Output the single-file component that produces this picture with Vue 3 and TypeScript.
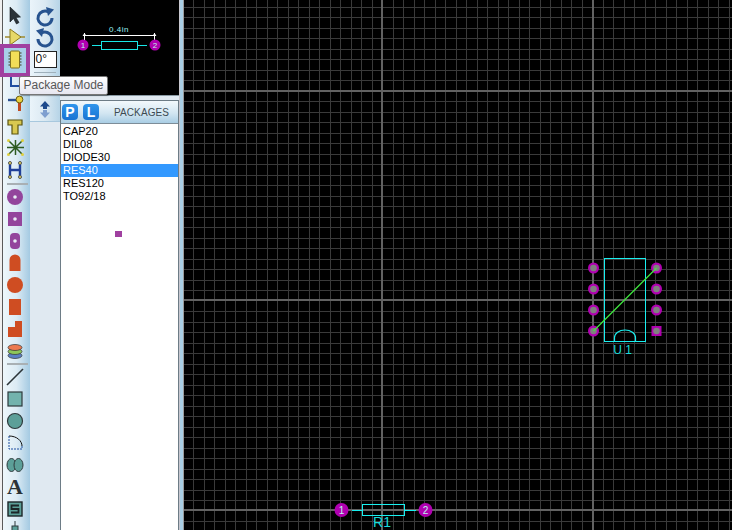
<script setup lang="ts">
const packages = ['CAP20', 'DIL08', 'DIODE30', 'RES40', 'RES120', 'TO92/18']
const selected = 'RES40'

const majorX = [382, 593]
const majorY = [91, 300, 510]
const minorX: number[] = []
const minorY: number[] = []
for (let k = -18; k < 36; k++) {
  const x = Math.round(382 + k * 10.5)
  if (x >= 184 && k % 20 !== 0) minorX.push(x)
}
for (let k = -8; k < 42; k++) {
  const y = Math.round(90.5 + k * 10.5)
  if (y >= 0 && k % 20 !== 0) minorY.push(y)
}
const pinRows = [268, 289, 310, 331]
</script>

<template>
  <div class="app">
    <div class="edge"></div>
    <nav class="tools">
      <span class="tool"><svg width="22" height="22" viewBox="0 0 22 22"><path d="M6 2 L6 17 L9.500 13.500 L12.500 19 L15 17.500 L12 12.500 L16.500 12 Z" fill="#2b3338" stroke="#11161a" stroke-width=".6"/></svg></span>
      <span class="tool"><svg width="22" height="22" viewBox="0 0 22 22"><path d="M1 10 H7 M15 10 H21" stroke="#a08a30" stroke-width="1.5"/><path d="M6 2 V18 L17 10 Z" fill="#e6d868" stroke="#8a7a20"/></svg></span>
      <span class="tool on"><svg width="22" height="22" viewBox="0 0 22 22"><path d="M4.500 4h2.500M4.500 7h2.500M4.500 10h2.500M4.500 13h2.500M4.500 16h2.500M15 4h2.500M15 7h2.500M15 10h2.500M15 13h2.500M15 16h2.500" stroke="#3a3a18"/><rect x="6.500" y="2" width="9" height="17" rx="1" fill="#f2de58" stroke="#7d7020"/></svg></span>
      <span class="tool"><svg width="22" height="22" viewBox="0 0 22 22"><path d="M7 3 V15 H18" fill="none" stroke="#1f4ea0" stroke-width="2"/><rect x="5" y="1" width="4" height="4" fill="#e0c820"/></svg></span>
      <span class="tool"><svg width="22" height="22" viewBox="0 0 22 22"><path d="M4 7 H15" stroke="#2a4f90" stroke-width="2.400"/><path d="M15.500 8 V18" stroke="#c04a20" stroke-width="3"/><circle cx="15.500" cy="6.500" r="3.400" fill="#e8d040" stroke="#6b6010"/></svg></span>
      <span class="tool"><svg width="22" height="22" viewBox="0 0 22 22"><path d="M4 5 H18 V10 H14 V19 H8 V10 H4 Z" fill="#d8c850" stroke="#5b5510" stroke-width="1.200"/></svg></span>
      <span class="tool"><svg width="22" height="22" viewBox="0 0 22 22"><path d="M5 4 L18 17 M18 4 L5 17 M3 10.500 H20 M11.500 3 V18" stroke="#2c5a20" stroke-width="1.500"/><g fill="#e0d040"><circle cx="4.500" cy="3.500" r="1.500"/><circle cx="18.500" cy="3.500" r="1.500"/><circle cx="4.500" cy="17.500" r="1.500"/><circle cx="18.500" cy="17.500" r="1.500"/></g></svg></span>
      <span class="tool"><svg width="22" height="22" viewBox="0 0 22 22"><path d="M6 5 V17 M16 5 V17 M6 11 H16" stroke="#1f3f98" stroke-width="2.400" fill="none"/><g fill="#e8d860" stroke="#555"><circle cx="6" cy="4" r="1.500"/><circle cx="16" cy="4" r="1.500"/><circle cx="6" cy="18" r="1.500"/><circle cx="16" cy="18" r="1.500"/></g></svg></span>
      <span class="sep"></span>
      <span class="tool"><svg width="22" height="22" viewBox="0 0 22 22"><circle cx="11" cy="11" r="8" fill="#93459c"/><circle cx="11" cy="11" r="1.800" fill="#e8eef4"/></svg></span>
      <span class="tool"><svg width="22" height="22" viewBox="0 0 22 22"><rect x="4" y="4" width="14" height="14" fill="#93459c"/><circle cx="11" cy="11" r="1.800" fill="#e8eef4"/></svg></span>
      <span class="tool"><svg width="22" height="22" viewBox="0 0 22 22"><rect x="6" y="3" width="10" height="16" rx="4" fill="#93459c"/><circle cx="11" cy="11" r="1.800" fill="#e8eef4"/></svg></span>
      <span class="tool"><svg width="22" height="22" viewBox="0 0 22 22"><path d="M5.500 19 V8 A5.500 5.500 0 0 1 16.500 8 V19 Z" fill="#cf4d22"/></svg></span>
      <span class="tool"><svg width="22" height="22" viewBox="0 0 22 22"><circle cx="11" cy="11" r="8" fill="#cf4d22"/></svg></span>
      <span class="tool"><svg width="22" height="22" viewBox="0 0 22 22"><rect x="5" y="3" width="12" height="16" fill="#cf4d22"/></svg></span>
      <span class="tool"><svg width="22" height="22" viewBox="0 0 22 22"><path d="M4 19 V9 H11 V3 H18 V19 Z" fill="#cf4d22"/></svg></span>
      <span class="tool"><svg width="22" height="22" viewBox="0 0 22 22"><ellipse cx="11" cy="15.500" rx="7" ry="3" fill="#5b7fc4" stroke="#333" stroke-width=".7"/><ellipse cx="11" cy="11.500" rx="7" ry="3" fill="#8ec65a" stroke="#333" stroke-width=".7"/><ellipse cx="11" cy="7.500" rx="7" ry="3" fill="#ec7a50" stroke="#333" stroke-width=".7"/></svg></span>
      <span class="sep thin"></span>
      <span class="tool"><svg width="22" height="22" viewBox="0 0 22 22"><path d="M3 19 L19 3" stroke="#2c3438" stroke-width="1.600"/></svg></span>
      <span class="tool"><svg width="22" height="22" viewBox="0 0 22 22"><rect x="4" y="4" width="14" height="14" fill="#73b3ad" stroke="#2e3a3c" stroke-width="1.200"/></svg></span>
      <span class="tool"><svg width="22" height="22" viewBox="0 0 22 22"><circle cx="11" cy="11" r="7.500" fill="#5c9f98" stroke="#2e3a3c" stroke-width="1.200"/></svg></span>
      <span class="tool"><svg width="22" height="22" viewBox="0 0 22 22"><path d="M5 4 C13 4 18 9 18 14" fill="none" stroke="#111" stroke-width="1"/><path d="M5 4 V17 H18 V14" fill="none" stroke="#1f4ea0" stroke-dasharray="2 1"/></svg></span>
      <span class="tool"><svg width="22" height="22" viewBox="0 0 22 22"><ellipse cx="7.500" cy="11" rx="4.500" ry="6.500" fill="#5c9f98" stroke="#2e3a3c"/><ellipse cx="14.500" cy="11" rx="4.500" ry="6.500" fill="#5c9f98" stroke="#2e3a3c"/></svg></span>
      <span class="tool letter">A</span>
      <span class="tool"><svg width="22" height="22" viewBox="0 0 22 22"><rect x="4" y="4" width="14" height="14" fill="#5c9f98" stroke="#1c2628" stroke-width="1.400"/><path d="M15 7.500 H7.500 V11 H14.500 V14.500 H7" fill="none" stroke="#1c2628" stroke-width="1.800"/></svg></span>
      <span class="tool"><svg width="22" height="22" viewBox="0 0 22 22"><path d="M11 1 V21 M5 11 H17" stroke="#2e3a3c"/><rect x="8" y="6" width="6" height="10" fill="#5c9f98" stroke="#2e3a3c"/></svg></span>
    </nav>

    <section class="side">
      <div class="top">
        <div class="rotate">
          <svg class="rot" width="22" height="22" viewBox="0 0 22 22"><path d="M18 12 A7 7 0 1 1 14.500 6" fill="none" stroke="#27538f" stroke-width="3"/><path d="M12 1 L20 3.500 L14 10 Z" fill="#27538f"/></svg>
          <svg class="rot" width="22" height="22" viewBox="0 0 22 22"><path d="M4 11 A7 7 0 1 0 7.500 5" fill="none" stroke="#27538f" stroke-width="3"/><path d="M10 0 L2 2.500 L8 9 Z" fill="#27538f"/></svg>
          <div class="angle">0°</div>
          <div class="rule"></div>
          <svg class="flip" width="10" height="17" viewBox="0 0 10 17"><path d="M5 0 L10 5.500 H7 V8 H3 V5.500 H0 Z" fill="#1d4a8c"/><path d="M5 17 L10 11.500 H7 V9 H3 V11.500 H0 Z" fill="#7f9fcf"/></svg>
        </div>
        <div class="preview">
          <svg width="119" height="95" viewBox="60 0 119 95">
            <text x="119" y="31.500" class="dim">0.4in</text>
            <path d="M84.500 35.500 H154.500" stroke="#fff"/>
            <path d="M84.500 33 V41 M154.500 33 V41" stroke="#fff"/>
            <path d="M84.500 33 l-2 3 h4 Z M154.500 33 l-2 3 h4 Z" fill="#fff"/>
            <path d="M92 45.500 H101 M138 45.500 H147" stroke="#19e6e6"/>
            <rect x="101.500" y="41.500" width="36" height="8" fill="none" stroke="#19e6e6"/>
            <circle cx="83" cy="45" r="5.500" fill="#b000b0"/>
            <circle cx="155" cy="45" r="5.500" fill="#b000b0"/>
            <text x="83" y="48" class="num small">1</text>
            <text x="155" y="48" class="num small">2</text>
          </svg>
        </div>
      </div>
      <div class="lower">
        <div class="panel">
          <div class="panel-head">
            <span class="badge">P</span>
            <span class="badge">L</span>
            <span class="panel-title">PACKAGES</span>
          </div>
          <ul class="list">
            <li v-for="p in packages" :key="p" :class="{ active: p === selected }">{{ p }}</li>
          </ul>
          <span class="marker"></span>
        </div>
      </div>
    </section>

    <div class="sash"></div>

    <main class="canvas">
      <svg width="548" height="530" viewBox="184 0 548 530" shape-rendering="crispEdges">
        <rect x="184" y="0" width="548" height="530" fill="#000"/>
        <line v-for="x in minorX" :key="'vx' + x" :x1="x + .5" :x2="x + .5" y1="0" y2="530" stroke="#3a3a3a"/>
        <line v-for="y in minorY" :key="'hy' + y" :y1="y + .5" :y2="y + .5" x1="184" x2="732" stroke="#3a3a3a"/>
        <line v-for="x in majorX" :key="'Vx' + x" :x1="x" :x2="x" y1="0" y2="530" stroke="#626262" stroke-width="2"/>
        <line v-for="y in majorY" :key="'Hy' + y" :y1="y" :y2="y" x1="184" x2="732" stroke="#626262" stroke-width="2"/>
        <rect x="604.500" y="258.500" width="41" height="83" fill="none" stroke="#19f0f0"/>
        <g shape-rendering="auto">
          <path d="M614.500 342 V337.500 A10.500 7.500 0 0 1 635.500 337.500 V342" fill="none" stroke="#19f0f0" stroke-width="1.200"/>
          <text x="622.500" y="354" class="ref">U 1</text>
          <g v-for="y in pinRows" :key="'l' + y">
            <circle cx="593.500" :cy="y" r="5.500" fill="#b000b0"/>
            <circle cx="593.500" :cy="y" r="3.300" fill="#808080"/>
          </g>
          <g v-for="y in pinRows.slice(0, 3)" :key="'r' + y">
            <circle cx="656.500" :cy="y" r="5.500" fill="#b000b0"/>
            <circle cx="656.500" :cy="y" r="3.300" fill="#808080"/>
          </g>
          <rect x="651.500" y="326" width="10" height="10" fill="#b000b0"/>
          <circle cx="656.500" cy="331" r="3.300" fill="#808080"/>
          <path d="M593.500 331 L656.500 268" stroke="#3fe83f" stroke-width="1.300"/>

          <path d="M352 510.500 H362 M405 510.500 H416" stroke="#19f0f0"/>
          <rect x="362.500" y="504.500" width="42" height="11" fill="none" stroke="#19f0f0"/>
          <text x="382" y="527" class="ref big">R1</text>
          <circle cx="341.500" cy="510" r="7" fill="#b000b0"/>
          <circle cx="425.500" cy="510" r="7" fill="#b000b0"/>
          <text x="341.500" y="513.500" class="num">1</text>
          <text x="425.500" y="513.500" class="num">2</text>
        </g>
      </svg>
    </main>

    <div class="tooltip">Package Mode</div>
  </div>
</template>

<style scoped>
.app {
  position: relative;
  display: flex;
  width: 732px;
  height: 530px;
  overflow: hidden;
  background: #000;
  font-family: "Liberation Sans", Arial, sans-serif;
}
.edge {
  width: 3px;
  flex: none;
  background: linear-gradient(90deg, #f0f0f0 0 2px, #5a5a5a 2px);
}
.tools {
  width: 27px;
  flex: none;
  display: flex;
  flex-direction: column;
  padding-top: 5px;
  background: linear-gradient(90deg, #eef7fb 0%, #dcebf4 50%, #a4cae2 100%);
}
.tool {
  height: 22px;
  flex: none;
  display: flex;
  align-items: center;
  justify-content: center;
  padding-right: 3px;
}
.tool.on {
  position: relative;
}
.tool.on::before {
  content: "";
  position: absolute;
  left: -3px;
  top: -5px;
  width: 30px;
  height: 33px;
  box-sizing: border-box;
  border: 4px solid #a040a0;
  background: #a9cfe8;
}
.tool.on svg {
  position: relative;
}
.letter {
  font-family: "Liberation Serif", serif;
  font-size: 22px;
  font-weight: 700;
  color: #2a3236;
}
.sep {
  height: 2px;
  flex: none;
  margin: 2px 2px 1px 4px;
  background: #a9b0b4;
}
.sep.thin {
  margin: 1px 2px 1px 4px;
}
.side {
  width: 149px;
  flex: none;
  display: flex;
  flex-direction: column;
  background: #e0e9f1;
}
.top {
  display: flex;
  height: 95px;
  flex: none;
}
.rotate {
  width: 30px;
  height: 122px;
  flex: none;
  display: flex;
  flex-direction: column;
  align-items: center;
  padding-top: 6px;
  box-sizing: border-box;
  background: linear-gradient(90deg, #eaf4fa 0%, #dbe9f2 50%, #b6d4e7 100%);
  border-bottom: 1px solid #a8c8de;
  position: relative;
  z-index: 1;
}
.rot {
  display: block;
}
.angle {
  width: 23px;
  height: 17px;
  margin-top: 1px;
  box-sizing: border-box;
  border: 1px solid #222;
  background: #fff;
  font-size: 12px;
  line-height: 15px;
  padding-left: 1px;
  color: #111;
}
.rule {
  width: 22px;
  height: 1px;
  margin-top: 4px;
  background: #9fb0bb;
}
.flip {
  margin-top: 28px;
  flex: none;
}
.preview {
  flex: 1;
  background: #000;
}
.preview svg {
  display: block;
}
.dim {
  font-family: "Liberation Sans", sans-serif;
  font-size: 8px;
  fill: #9af0f4;
  text-anchor: middle;
  letter-spacing: .5px;
}
.num {
  font-family: "Liberation Sans", sans-serif;
  font-size: 10px;
  fill: #bdf5ee;
  text-anchor: middle;
}
.num.small {
  font-size: 8px;
}
.ref {
  font-family: "Liberation Sans", sans-serif;
  font-size: 12px;
  fill: #19dcdc;
  text-anchor: middle;
}
.ref.big {
  font-size: 14px;
}
.lower {
  flex: 1;
  display: flex;
  padding: 4px 0 0 30px;
  background: #e0e9f1;
  border-top: 1px solid #8a9aa4;
}
.panel {
  position: relative;
  flex: 1;
  border: 1px solid #6d7c86;
  border-bottom: 0;
  background: #fff;
  display: flex;
  flex-direction: column;
}
.panel-head {
  height: 23px;
  flex: none;
  box-sizing: border-box;
  display: flex;
  align-items: center;
  gap: 5px;
  padding-left: 1px;
  background: linear-gradient(180deg, #f3f9fc 0%, #d3e6f2 55%, #a9cde4 100%);
  border-bottom: 1px solid #7d8d98;
}
.badge {
  width: 16px;
  height: 16px;
  border-radius: 4px;
  background: linear-gradient(180deg, #2f95ec, #1873d2);
  color: #fff;
  font-size: 14px;
  font-weight: 700;
  line-height: 16px;
  text-align: center;
}
.panel-title {
  margin-left: 10px;
  font-size: 10px;
  letter-spacing: .1px;
  color: #3c4a52;
}
.list {
  list-style: none;
  margin: 0;
  padding: 1px 0 0;
}
.list li {
  height: 13px;
  line-height: 13px;
  font-size: 11px;
  padding-left: 2px;
  color: #000;
}
.list li.active {
  background: #3399ff;
  color: #fff;
}
.marker {
  position: absolute;
  left: 54px;
  top: 130px;
  width: 7px;
  height: 6px;
  background: #a040a0;
}
.sash {
  width: 5px;
  flex: none;
  background: linear-gradient(90deg, #c8c8d0 0 1px, #a8cde3 1px 4px, #9a9a9a 4px);
}
.canvas {
  flex: 1;
  min-width: 0;
}
.canvas svg {
  display: block;
}
.tooltip {
  position: absolute;
  z-index: 5;
  left: 19px;
  top: 76px;
  width: 89px;
  height: 19px;
  box-sizing: border-box;
  border: 1px solid #767676;
  border-radius: 2px;
  background: linear-gradient(180deg, #ffffff, #e6e6f0);
  box-shadow: 1px 1px 1px rgba(0, 0, 0, .35);
  color: #575757;
  font-size: 12px;
  line-height: 17px;
  text-align: center;
  white-space: nowrap;
}
</style>
